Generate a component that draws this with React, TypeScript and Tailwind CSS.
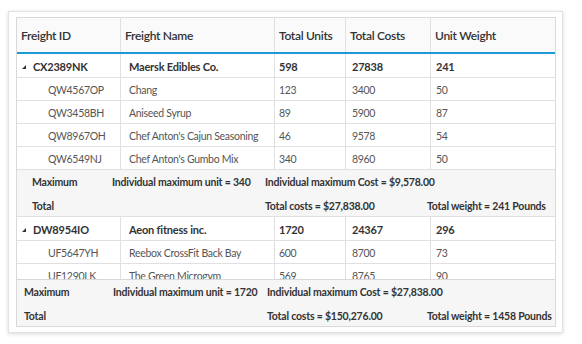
import React from 'react'

interface Item {
    id: string;
    name: string;
    units: number;
    costs: number;
    weight: number;
}

interface Group {
    id: string;
    name: string;
    units: number;
    costs: number;
    weight: number;
    items: Item[];
    maxUnit: string;
    maxCost: string;
    totalCost: string;
    totalWeight: string;
}

const groups: Group[] = [
    {
        id: 'CX2389NK', name: 'Maersk Edibles Co.', units: 598, costs: 27838, weight: 241,
        items: [
            { id: 'QW4567OP', name: 'Chang', units: 123, costs: 3400, weight: 50 },
            { id: 'QW3458BH', name: 'Aniseed Syrup', units: 89, costs: 5900, weight: 87 },
            { id: 'QW8967OH', name: "Chef Anton's Cajun Seasoning", units: 46, costs: 9578, weight: 54 },
            { id: 'QW6549NJ', name: "Chef Anton's Gumbo Mix", units: 340, costs: 8960, weight: 50 },
        ],
        maxUnit: '340', maxCost: '$9,578.00', totalCost: '$27,838.00', totalWeight: '241',
    },
    {
        id: 'DW8954IO', name: 'Aeon fitness inc.', units: 1720, costs: 24367, weight: 296,
        items: [
            { id: 'UF5647YH', name: 'Reebox CrossFit Back Bay', units: 600, costs: 8700, weight: 73 },
            { id: 'UF1290LK', name: 'The Green Microgym', units: 569, costs: 8765, weight: 90 },
        ],
        maxUnit: '1720', maxCost: '$27,838.00', totalCost: '$150,276.00', totalWeight: '1458',
    },
]

const cols = 'grid grid-cols-[103px_154px_71px_85px_1fr]'
const cell = 'border-l border-[#e0e0e0] flex items-center overflow-hidden whitespace-nowrap'

const Caret = () => (
    <svg width="6" height="6" viewBox="0 0 6 6" className="mr-[6px] shrink-0">
        <polygon points="5,1 5,5 1,5" fill="#333" />
    </svg>
)

const SummaryRows: React.FC<{ g: Group; footer?: boolean }> = ({ g, footer }) => (
    <div className={`bg-[#f6f6f6] font-bold text-[10.5px] tracking-[-0.2px] text-[#333] whitespace-nowrap ${footer ? 'border-t border-[#d8d8d8]' : 'border-b border-[#e0e0e0]'}`}>
        <div className="flex h-[23px] items-center pt-[3px]">
            <span className={`shrink-0 ${footer ? 'w-[96px] pl-[7px]' : 'w-[95px] pl-[15px]'}`}>Maximum</span>
            <span className={`shrink-0 ${footer ? 'w-[154px]' : 'w-[153px]'}`}>Individual maximum unit = {g.maxUnit}</span>
            <span>Individual maximum Cost = {g.maxCost}</span>
        </div>
        <div className="flex h-[23px] items-center pt-[4px]">
            <span className={`shrink-0 ${footer ? 'w-[250px] pl-[7px]' : 'w-[248px] pl-[15px]'}`}>Total</span>
            <span className={`shrink-0 ${footer ? 'w-[160px]' : 'w-[162px]'}`}>Total costs = {g.totalCost}</span>
            <span>Total weight = {g.totalWeight} Pounds</span>
        </div>
    </div>
)

const App: React.FC = () => {
    const last = groups[groups.length - 1]
    return (
        <div className="w-[582px] h-[344px] bg-white pt-[11px] pl-[8px]" style={{ fontFamily: 'Lato, "Open Sans", sans-serif' }}>
            <div className="w-[555px] h-[322px] border border-[#e3e3e3] bg-white shadow-[0_1px_4px_rgba(0,0,0,0.15)] pl-[7px] pt-[5px]">
                <div className="w-[540px] h-[310px] border border-[#d9d9d9] flex flex-col overflow-hidden">
                    {/* header */}
                    <div className={`${cols} h-[36px] bg-[#fafafa] border-b-2 border-[#1d9ad6] text-[12px] tracking-[-0.3px] font-semibold text-[#333]`}>
                        <div className="flex items-center pl-[4px] pt-[2px]">Freight ID</div>
                        <div className={`${cell} pl-[4px] pt-[2px]`}>Freight Name</div>
                        <div className={`${cell} pl-[4px] pt-[2px]`}>Total Units</div>
                        <div className={`${cell} pl-[4px] pt-[2px]`}>Total Costs</div>
                        <div className={`${cell} pl-[4px] pt-[2px]`}>Unit Weight</div>
                    </div>

                    {/* content */}
                    <div className="flex-1 overflow-hidden">
                        {groups.map((g) => (
                            <div key={g.id}>
                                <div className={`${cols} h-[24px] border-b border-[#e0e0e0] text-[11px] tracking-[-0.2px] font-bold text-[#333]`}>
                                    <div className="flex items-center pl-[4px] pt-[3px]"><Caret />{g.id}</div>
                                    <div className={`${cell} pl-[8px] pt-[3px]`}>{g.name}</div>
                                    <div className={`${cell} pl-[4px] pt-[3px]`}>{g.units}</div>
                                    <div className={`${cell} pl-[6px] pt-[3px]`}>{g.costs}</div>
                                    <div className={`${cell} pl-[5px] pt-[3px]`}>{g.weight}</div>
                                </div>
                                {g.items.map((it) => (
                                    <div key={it.id} className={`${cols} h-[23px] border-b border-[#e0e0e0] text-[10.5px] tracking-[-0.3px] text-[#555]`}>
                                        <div className="flex items-center pl-[31px] pt-[3px]">{it.id}</div>
                                        <div className={`${cell} pl-[8px] pt-[3px]`}>{it.name}</div>
                                        <div className={`${cell} pl-[4px] pt-[3px]`}>{it.units}</div>
                                        <div className={`${cell} pl-[6px] pt-[3px]`}>{it.costs}</div>
                                        <div className={`${cell} pl-[5px] pt-[3px]`}>{it.weight}</div>
                                    </div>
                                ))}
                                {g !== last && <SummaryRows g={g} />}
                            </div>
                        ))}
                    </div>

                    {/* footer */}
                    <SummaryRows g={last} footer />
                </div>
            </div>
        </div>
    )
}

export default App
